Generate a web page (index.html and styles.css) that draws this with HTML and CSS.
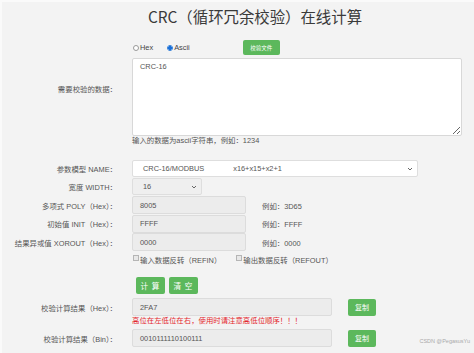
FILE: index.html
```html
<!DOCTYPE html>
<html lang="zh-CN">
<head>
<meta charset="utf-8">
<title>CRC在线计算</title>
<link rel="stylesheet" href="styles.css">
</head>
<body>
<h1 class="title">CRC（循环冗余校验）在线计算</h1>

<div class="row row-radio">
  <div class="lbl"></div>
  <label class="opt"><span class="radio"></span>Hex</label>
  <label class="opt opt-ascii"><span class="radio checked"></span>Ascii</label>
  <span class="btn btn-file">校验文件</span>
</div>

<div class="row row-data">
  <div class="lbl lbl-top">需要校验的数据：</div>
  <textarea class="data">CRC-16</textarea>
</div>

<div class="row row-hint">
  <div class="lbl"></div>
  <div class="hint">输入的数据为ascii字符串，例如：1234</div>
</div>

<div class="row row-name">
  <div class="lbl">参数模型 NAME：</div>
  <div class="select select-name">
    <span class="sel-a">CRC-16/MODBUS</span>
    <span class="sel-b">x16+x15+x2+1</span>
    <svg class="chev" width="6" height="4" viewBox="0 0 6 4"><path d="M1 1l2 2 2-2" fill="none" stroke="#666" stroke-width="1"/></svg>
  </div>
</div>

<div class="row row-width">
  <div class="lbl">宽度 WIDTH：</div>
  <div class="select select-width">
    <span class="sel-a">16</span>
    <svg class="chev" width="6" height="4" viewBox="0 0 6 4"><path d="M1 1l2 2 2-2" fill="none" stroke="#666" stroke-width="1"/></svg>
  </div>
</div>

<div class="row row-field">
  <div class="lbl">多项式 POLY（Hex）：</div>
  <div class="input input-short">8005</div>
  <div class="eg">例如：3D65</div>
</div>

<div class="row row-field">
  <div class="lbl">初始值 INIT（Hex）：</div>
  <div class="input input-short">FFFF</div>
  <div class="eg">例如：FFFF</div>
</div>

<div class="row row-field">
  <div class="lbl">结果异或值 XOROUT（Hex）：</div>
  <div class="input input-short">0000</div>
  <div class="eg">例如：0000</div>
</div>

<div class="row row-check">
  <div class="lbl"></div>
  <label class="chk"><span class="box"></span>输入数据反转（REFIN）</label>
  <label class="chk chk-2"><span class="box"></span>输出数据反转（REFOUT）</label>
</div>

<div class="row row-btns">
  <div class="lbl"></div>
  <span class="btn btn-big">计 算</span>
  <span class="btn btn-big">清 空</span>
</div>

<div class="row row-res">
  <div class="lbl">校验计算结果（Hex）：</div>
  <div class="input input-long">2FA7</div>
  <span class="btn btn-copy">复制</span>
</div>

<div class="row row-warn">
  <div class="lbl"></div>
  <div class="warn">高位在左低位在右，使用时请注意高低位顺序！！！</div>
</div>

<div class="row row-res row-bin">
  <div class="lbl">校验计算结果（Bin）：</div>
  <div class="input input-long">0010111110100111</div>
  <span class="btn btn-copy">复制</span>
</div>

<div class="watermark">CSDN @PegasusYu</div>
</body>
</html>
```

FILE: styles.css
```css
html, body {
  height: 100%;
}
body {
  margin: 0;
  background: #f3f3f3;
  border-top: 2px solid #fafafa;
  border-left: 2px solid #fafafa;
  box-sizing: border-box;
  font-family: "Liberation Sans", "Noto Sans CJK SC", sans-serif;
  font-size: 7.4px;
  color: #555;
  position: relative;
  overflow: hidden;
}
.title {
  margin: 0 0 10px;
  padding-left: 34px;
  height: 28px;
  line-height: 28px;
  text-align: center;
  font-family: "Noto Sans CJK SC", sans-serif;
  font-weight: 400;
  font-size: 15.4px;
  color: #3a3a3a;
}
.row {
  display: flex;
  align-items: center;
}
.lbl {
  flex: none;
  width: 115px;
  margin-right: 15px;
  text-align: right;
  white-space: nowrap;
  color: #555;
}
.row-radio {
  height: 15px;
  margin-bottom: 3px;
}
.opt {
  display: flex;
  align-items: center;
  color: #444;
}
.opt-ascii {
  margin-left: 13px;
}
.radio {
  width: 4px;
  height: 4px;
  border: 1px solid #999;
  border-radius: 50%;
  background: #fff;
  margin-right: 1px;
  margin-left: 1px;
}
.radio.checked {
  border-color: #2a7ad8;
  background: radial-gradient(circle, #1a6fd8 0 60%, #fff 70%);
}
.btn {
  display: flex;
  align-items: center;
  justify-content: center;
  background: #5cb85c;
  color: #fff;
  border-radius: 2px;
  font-family: "Noto Sans CJK SC", sans-serif;
}
.btn-file {
  margin-left: 53px;
  width: 37px;
  height: 15px;
  font-size: 5.5px;
}
.row-data {
  height: 78px;
  align-items: flex-start;
}
.lbl-top {
  padding-top: 25px;
}
.data {
  width: 330px;
  height: 78px;
  box-sizing: border-box;
  margin: 0;
  border: 1px solid #d8d8d8;
  border-radius: 2px;
  background: #fff;
  padding: 3px 7px;
  font-family: "Liberation Sans", sans-serif;
  font-size: 7.4px;
  color: #555;
  resize: both;
  outline: none;
}
.row-hint {
  height: 10px;
  line-height: 10px;
}
.hint {
  color: #555;
}
.select {
  display: flex;
  align-items: center;
  box-sizing: border-box;
  height: 17px;
  border: 1px solid #dedede;
  border-radius: 2px;
  padding: 0 4px 0 10px;
  color: #555;
}
.select .chev {
  margin-left: auto;
}
.row-name {
  margin-top: 14px;
}
.select-name {
  width: 286px;
  background: #fff;
}
.sel-b {
  margin-left: 29px;
}
.row-width {
  margin-top: 1px;
}
.select-width {
  width: 70px;
  background: #efefef;
}
.row-field {
  margin-top: 0.5px;
}
.row-width + .row-field {
  margin-top: 1px;
}
.input {
  box-sizing: border-box;
  height: 18px;
  display: flex;
  align-items: center;
  background: #ececec;
  border: 1px solid #dcdcdc;
  border-radius: 2px;
  padding: 0 7px;
  color: #555;
}
.input-short {
  width: 114px;
}
.eg {
  margin-left: 16px;
}
.row-check {
  margin-top: 3px;
  height: 10px;
}
.chk {
  display: flex;
  align-items: center;
}
.chk-2 {
  margin-left: 14px;
}
.box {
  width: 4px;
  height: 4px;
  border: 1px solid #b5b5b5;
  background: #e8e8e8;
  margin: 0 1px 3px 1px;
}
.row-btns {
  margin-top: 13px;
  gap: 4px;
}
.btn-big {
  width: 29px;
  height: 17px;
  font-size: 7.6px;
  letter-spacing: 1px;
}
.row-res {
  margin-top: 4px;
}
.input-long {
  width: 200px;
}
.btn-copy {
  margin-left: 16px;
  width: 28px;
  height: 17px;
  font-size: 7px;
}
.row-warn {
  height: 10px;
  line-height: 10px;
}
.warn {
  color: #e4262c;
}
.row-bin {
  margin-top: 3px;
}
.watermark {
  position: absolute;
  right: 4px;
  bottom: 9px;
  font-size: 5.5px;
  color: #aaa;
  font-family: "Liberation Sans", sans-serif;
}
```
